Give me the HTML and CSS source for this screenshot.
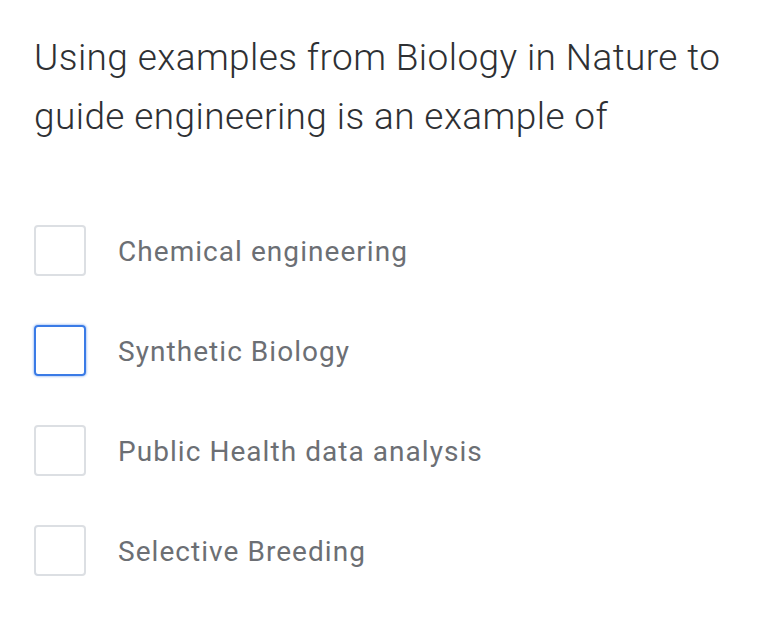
FILE: index.html
```html
<!DOCTYPE html>
<html>
<head>
<meta charset="utf-8">
<link rel="stylesheet" href="styles.css">
</head>
<body>
<main class="question">
  <h1 class="prompt">Using examples from Biology in Nature to guide engineering is an example of</h1>
  <ul class="options">
    <li class="option"><span class="box"></span><span class="label">Chemical engineering</span></li>
    <li class="option"><span class="box box-focus"></span><span class="label">Synthetic Biology</span></li>
    <li class="option"><span class="box"></span><span class="label">Public Health data analysis</span></li>
    <li class="option"><span class="box"></span><span class="label">Selective Breeding</span></li>
  </ul>
</main>
</body>
</html>
```

FILE: styles.css
```css
html, body {
  margin: 0;
  padding: 0;
  background: #ffffff;
}
.question {
  padding: 28px 34px 0 34px;
  font-family: Roboto, "Liberation Sans", sans-serif;
}
.prompt {
  margin: 0;
  font-size: 37px;
  font-weight: 300;
  line-height: 59px;
  letter-spacing: 0.4px;
  color: #2e3033;
  max-width: 700px;
}
.options {
  list-style: none;
  margin: 78px 0 0 0;
  padding: 0;
  display: flex;
  flex-direction: column;
  gap: 48px;
}
.option {
  display: flex;
  align-items: center;
  gap: 32px;
  height: 52px;
}
.box {
  box-sizing: border-box;
  width: 52px;
  height: 51px;
  border: 2px solid #dcdfe3;
  border-radius: 4px;
  flex: none;
}
.box-focus {
  border-color: #3a7be6;
  box-shadow: 0 0 2px 1px rgba(58, 123, 230, 0.35);
}
.label {
  font-size: 28px;
  font-weight: 400;
  color: #6c6f74;
  letter-spacing: 1.05px;
  padding-top: 2px;
}
```
